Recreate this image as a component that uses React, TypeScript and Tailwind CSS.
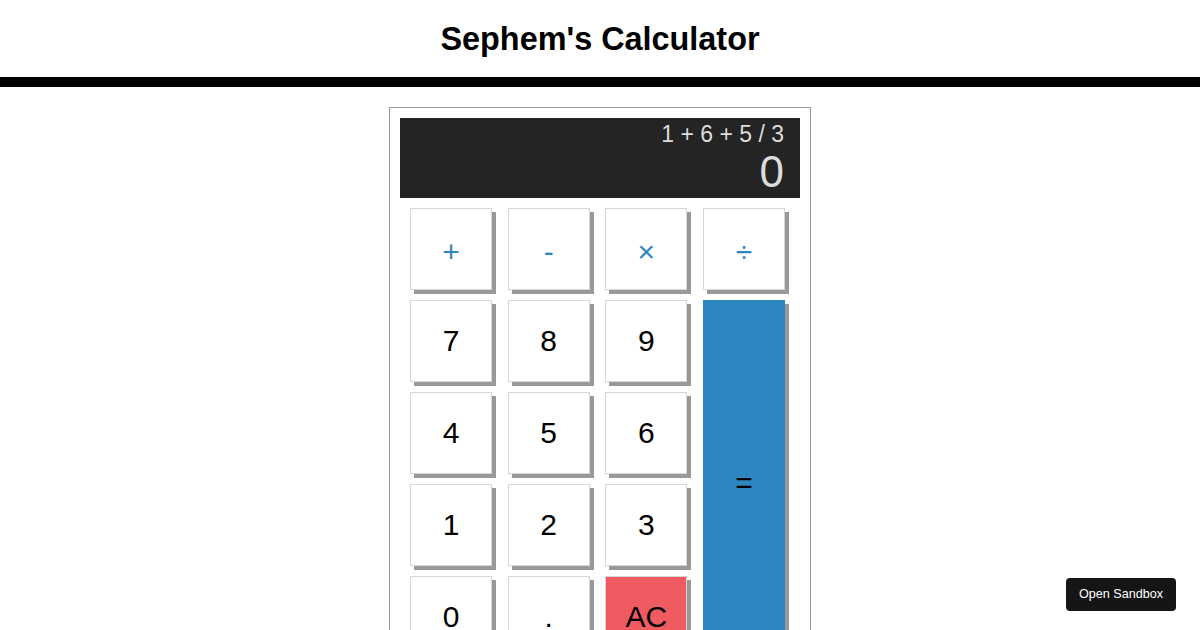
import React from 'react';

const keys: { label: string; kind: 'op' | 'num' | 'eq' | 'clear'; cls?: string }[] = [
  { label: '+', kind: 'op' },
  { label: '-', kind: 'op' },
  { label: '×', kind: 'op' },
  { label: '÷', kind: 'op' },
  { label: '7', kind: 'num' },
  { label: '8', kind: 'num' },
  { label: '9', kind: 'num' },
  { label: '=', kind: 'eq', cls: 'row-span-4' },
  { label: '4', kind: 'num' },
  { label: '5', kind: 'num' },
  { label: '6', kind: 'num' },
  { label: '1', kind: 'num' },
  { label: '2', kind: 'num' },
  { label: '3', kind: 'num' },
  { label: '0', kind: 'num' },
  { label: '.', kind: 'num' },
  { label: 'AC', kind: 'clear' },
];

function styleFor(kind: string) {
  switch (kind) {
    case 'op':
      return 'bg-white text-[#2e86c1] border-[#d6d6d6] pt-[6px]';
    case 'eq':
      return 'bg-[#2e86c1] text-black border-[#2e86c1] pt-[8px]';
    case 'clear':
      return 'bg-[#f05a61] text-black border-[#d6d6d6]';
    default:
      return 'bg-white text-black border-[#d6d6d6]';
  }
}

export default function App() {
  return (
    <div className="min-h-[630px] bg-white text-black" style={{ fontFamily: '"Liberation Sans", Arial, sans-serif' }}>
      <header className="h-[87px] border-b-[10px] border-black flex items-start justify-center pt-[19px]">
        <h1 className="text-[32.4px] leading-[40px] font-bold">Sephem's Calculator</h1>
      </header>

      <div className="flex justify-center pt-[20px]">
        <div className="w-[422px] border border-[#9a9a9a] p-[10px]">
          <div className="h-[80px] bg-[#242424] text-[#dcdcdc] text-right pr-[16px] pt-[2px]">
            <div className="text-[23px] leading-[28px]">1 + 6 + 5 / 3</div>
            <div className="text-[44px] leading-[48px]">0</div>
          </div>

          <div className="grid grid-cols-[82px_82px_82px_82px] auto-rows-[82px] gap-x-[15.67px] gap-y-[10px] pl-[10px] mt-[10px]">
            {keys.map((k) => (
              <button
                key={k.label}
                className={`border flex items-center justify-center text-[30px] leading-none shadow-[4px_4px_0_#999999] ${styleFor(
                  k.kind
                )} ${k.cls ?? ''}`}
              >
                {k.label}
              </button>
            ))}
          </div>
        </div>
      </div>

      <button className="fixed right-[24px] bottom-[19px] h-[33px] px-[13px] rounded-[4px] bg-[#151515] text-white text-[12.6px]">
        Open Sandbox
      </button>
    </div>
  );
}
